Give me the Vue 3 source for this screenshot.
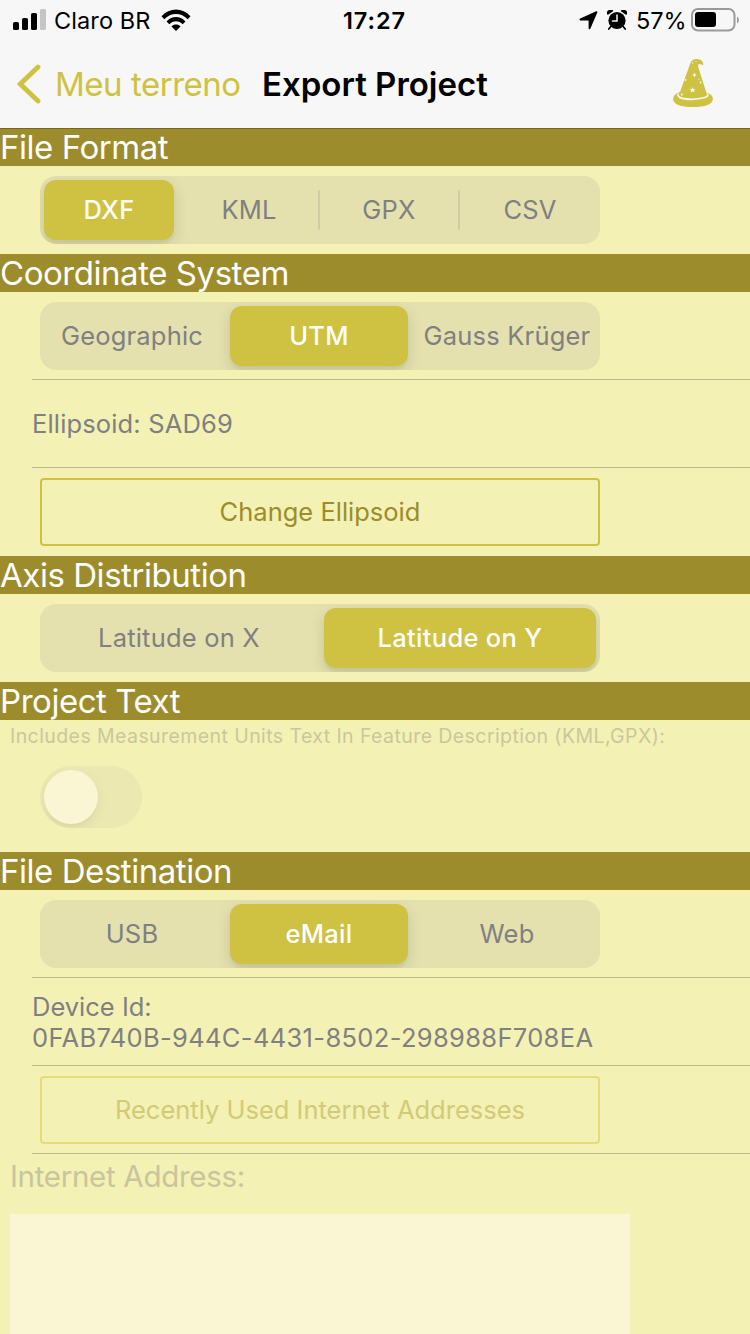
<script setup>
const formats = ['DXF', 'KML', 'GPX', 'CSV']
const systems = ['Geographic', 'UTM', 'Gauss Krüger']
const axes = ['Latitude on X', 'Latitude on Y']
const destinations = ['USB', 'eMail', 'Web']
</script>

<template>
  <div class="screen">
    <header class="top">
      <div class="status">
        <svg class="signal" viewBox="0 0 33 21" width="33" height="21">
          <rect x="0" y="13" width="6" height="8" rx="1.6" />
          <rect x="9" y="9" width="6" height="12" rx="1.6" />
          <rect x="18" y="4" width="6" height="17" rx="1.6" />
          <rect x="27" y="0" width="6" height="21" rx="1.6" fill="#c5c5c5" />
        </svg>
        <span class="carrier">Claro BR</span>
        <svg class="wifi" viewBox="0 0 30 22" width="30" height="22">
          <path d="M0.5 7.3C8.5-1.7 21.500-1.7 29.500 7.300L26.700 10.200C20 3.200 10 3.200 3.300 10.200Z" />
          <path d="M5.500 12.400C11 6.600 19 6.600 24.500 12.400L21.700 15.200C17.800 11.300 12.200 11.300 8.300 15.200Z" />
          <path d="M10.500 17.400C13 14.800 17 14.800 19.500 17.400L15 22Z" />
        </svg>
        <span class="clock">17:27</span>
        <svg class="arrow" viewBox="0 0 19 19" width="19" height="19">
          <path d="M17.200 0.300Q18.700 0 18.300 1.500L11.300 17.700Q10.300 19 9.600 17.500V9.400H1.300Q-0.400 8.800 1.200 7.600Z" />
        </svg>
        <svg class="alarm" viewBox="0 0 20 20" width="20" height="20">
          <circle cx="10" cy="10.500" r="8.600" />
          <path d="M0.700 5.100A3.500 3.500 0 0 1 6.400 0.900ZM13.600 0.900A3.500 3.500 0 0 1 19.300 5.100Z" />
          <path d="M3.800 16.500L1.800 19M16.200 16.500L18.200 19" stroke="#000" stroke-width="1.700" stroke-linecap="round" />
          <path d="M10 5V11H5.500" fill="none" stroke="#f7f7f7" stroke-width="1.500" stroke-linecap="round" />
        </svg>
        <span class="percent">57%</span>
        <svg class="battery" viewBox="0 0 49 24" width="49" height="24">
          <rect x="1" y="1" width="42.500" height="21.500" rx="6" fill="none" stroke="#9a9a9a" stroke-width="2" />
          <rect x="4" y="4" width="21" height="15" rx="3" />
          <path d="M46 8.500Q48 9.500 48 12T46 15.500Z" fill="#9a9a9a" />
        </svg>
      </div>
      <nav class="nav">
        <svg class="chevron" viewBox="0 0 24 40" width="24" height="40">
          <path d="M21 3L3.300 20L21 37" fill="none" stroke="#cfc142" stroke-width="4.800" stroke-linecap="round" stroke-linejoin="miter" />
        </svg>
        <span class="back">Meu terreno</span>
        <h1>Export Project</h1>
        <svg class="hat" viewBox="0 0 42 50" width="42" height="50">
          <path fill="#cfc142" d="M8 34L18 6Q20 0.500 25 1Q31 1 31.500 7L27 6Q25.500 6.500 26.500 10L34.500 35Q40.500 36 41 41Q40 49 21 49Q2 49 1 41Q1.500 36 8 34Z" />
          <path d="M6 36.500Q5.500 40 14 41Q24 42 33 39.500Q36.500 38.500 35.500 36.500" fill="none" stroke="#f7f7f7" stroke-width="1.800" stroke-linecap="round" />
          <g fill="#f7f7f7">
            <path d="M20.500 29L21.300 30.900L23.500 31.200L21.900 32.500L22.500 34.500L20.500 33.400L18.500 34.500L19.100 32.500L17.500 31.200L19.700 30.900Z" />
            <path d="M22.500 14.500L23.200 16.200L24.700 17L23.200 17.800L22.500 19.500L21.800 17.800L20.300 17L21.800 16.200Z" />
            <circle cx="13.500" cy="22" r=".9" /><circle cx="28.500" cy="24.500" r=".9" />
            <circle cx="20.500" cy="5" r=".7" /><circle cx="24" cy="3.500" r=".6" />
            <circle cx="9.800" cy="36.500" r="1" /><circle cx="27" cy="21.500" r=".6" />
          </g>
        </svg>
      </nav>
    </header>

    <h2 class="bar first">File Format</h2>
    <div class="row">
      <div class="segments four">
        <span v-for="(f, i) in formats" :key="f" class="segment" :class="{ on: i === 0, divided: i > 1 }">{{ f }}</span>
      </div>
    </div>

    <h2 class="bar">Coordinate System</h2>
    <div class="row lined">
      <div class="segments three">
        <span v-for="(s, i) in systems" :key="s" class="segment" :class="{ on: i === 1 }">{{ s }}</span>
      </div>
    </div>
    <div class="row lined info"><span class="ellipsoid">Ellipsoid: SAD69</span></div>
    <div class="row"><button class="action">Change Ellipsoid</button></div>

    <h2 class="bar">Axis Distribution</h2>
    <div class="row">
      <div class="segments two">
        <span v-for="(a, i) in axes" :key="a" class="segment" :class="{ on: i === 1 }">{{ a }}</span>
      </div>
    </div>

    <h2 class="bar">Project Text</h2>
    <div class="project">
      <p class="hint">Includes Measurement Units Text In Feature Description (KML,GPX):</p>
      <div class="switch"><div class="knob"></div></div>
    </div>

    <h2 class="bar">File Destination</h2>
    <div class="row lined">
      <div class="segments three">
        <span v-for="(d, i) in destinations" :key="d" class="segment" :class="{ on: i === 1 }">{{ d }}</span>
      </div>
    </div>
    <div class="row lined info device">
      <span>Device Id:</span>
      <span class="device-id">0FAB740B-944C-4431-8502-298988F708EA</span>
    </div>
    <div class="row lined"><button class="action faded" disabled>Recently Used Internet Addresses</button></div>
    <div class="address">
      <label>Internet Address:</label>
      <div class="field"></div>
    </div>
  </div>
</template>

<style>
body { background: #f4f1b5; }
</style>

<style scoped>
* { box-sizing: border-box; }
.screen {
  width: 750px; height: 1334px; overflow: hidden; background: #f4f1b5;
  font-family: Inter, "Liberation Sans", sans-serif; color: #808080;
  display: flex; flex-direction: column;
}
.screen > * { flex-shrink: 0; }
.top { height: 128px; background: #f7f7f7; color: #000; }
.status { height: 40px; display: flex; align-items: center; padding-left: 13px; white-space: nowrap; }
.status svg { flex: none; }
.signal { margin-top: -1px; }
.carrier { width: 107px; margin-left: 8px; font-size: 23.500px; line-height: 40px; letter-spacing: .1px; padding-top: 2px; }
.wifi { margin-top: -1px; }
.clock { width: 66px; margin-left: 152px; font-size: 23.500px; font-weight: 600; line-height: 40px; letter-spacing: .9px; padding-top: 2px; }
.arrow { margin-left: 170px; margin-top: 1px; }
.alarm { margin-left: 9px; }
.percent { width: 55px; margin-left: 9px; font-size: 23.500px; padding-top: 1px; }
.battery { margin-top: -1px; }
.nav { height: 88px; display: flex; align-items: center; padding-left: 17px; white-space: nowrap; }
.nav svg { flex: none; }
.back { width: 207px; margin-left: 14px; font-size: 33px; letter-spacing: -.48px; color: #cfc142; }
h1 { margin: 0; width: 410px; font-size: 33px; font-weight: 600; }
.hat { margin-top: -3px; }
.bar {
  margin: 0; height: 38px; background: #9c8c2b; color: #fff;
  font-size: 33px; font-weight: 400; line-height: 38px; letter-spacing: -.45px; white-space: nowrap;
}
.first { border-top: 1px solid #74671f; line-height: 37px; }
.row { height: 88px; padding: 10px 0 0 40px; position: relative; }
.lined::after { content: ""; position: absolute; left: 32px; right: 0; bottom: 0; height: 1px; background: #bdba90; }
.segments { width: 560px; height: 68px; padding: 4px; border-radius: 16px; background: #e4e1af; display: grid; column-gap: 10px; overflow: hidden; }
.four { grid-template-columns: 130px 130px 130px 132px; }
.three { grid-template-columns: 176px 178px 178px; }
.two { grid-template-columns: 270px 272px; }
.segment { height: 60px; border-radius: 12px; font-size: 25.500px; font-weight: 400; letter-spacing: .2px; line-height: 60px; text-align: center; white-space: nowrap; position: relative; }
.on { background: #cfc142; color: #fff; font-weight: 500; letter-spacing: .3px; box-shadow: 0 5px 15px rgba(0, 0, 0, .12), 0 4px 3px rgba(0, 0, 0, .04); }
.divided::before { content: ""; position: absolute; left: -6px; top: 10px; width: 2px; height: 40px; border-radius: 1px; background: #cfcca3; }
.info { padding: 0 0 0 32px; font-size: 25.500px; display: flex; align-items: center; }
.ellipsoid { letter-spacing: .15px; padding-bottom: 2px; }
.device { flex-direction: column; align-items: flex-start; justify-content: center; line-height: 31px; }
.device-id { letter-spacing: .34px; }
.action {
  display: block; width: 560px; height: 68px; padding: 0 0 2px; border: 2px solid #cfc142; border-radius: 4px;
  background: transparent; color: #9c8c2b; font-family: inherit; font-size: 25.500px; text-align: center;
}
.faded { border-color: #e4dc7b; color: #d2ca77; }
.project { height: 132px; }
.hint { margin: 0; padding-left: 10px; height: 46px; line-height: 33px; font-size: 19.500px; letter-spacing: .42px; color: #cac79e; white-space: nowrap; }
.switch { width: 102px; height: 62px; margin-left: 40px; padding: 4px; border-radius: 31px; background: #ebe8b2; overflow: hidden; }
.knob { width: 54px; height: 54px; border-radius: 50%; background: #faf5d3; box-shadow: 0 5px 14px rgba(0, 0, 0, .06), 0 3px 2px rgba(0, 0, 0, .02); }
.address { padding-left: 10px; }
label { display: block; height: 60px; line-height: 45px; font-size: 29.500px; letter-spacing: -.3px; color: #c8c59d; white-space: nowrap; }
.field { width: 620px; height: 120px; background: #faf5d3; }
</style>
